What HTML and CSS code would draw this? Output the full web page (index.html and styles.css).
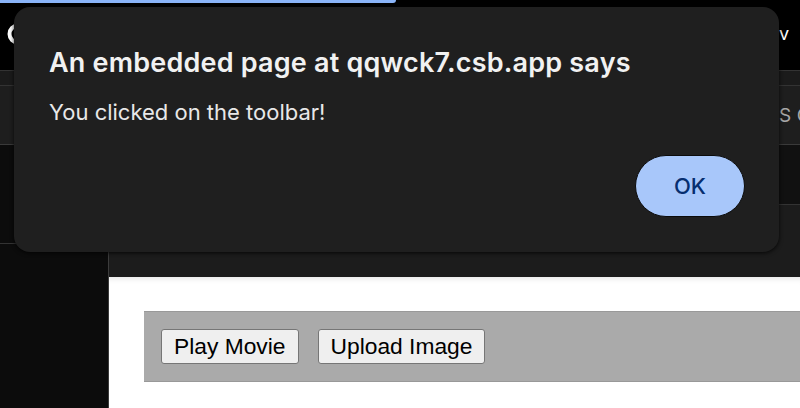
FILE: index.html
```html
<!DOCTYPE html>
<html>
<head>
<meta charset="utf-8">
<link rel="stylesheet" href="styles.css">
</head>
<body>
<div class="app">
  <header class="topbar">
    <div class="progress"></div>
    <div class="topbar-row">
      <svg class="logo" width="24" height="24" viewBox="0 0 24 24"><circle cx="12" cy="12" r="8.5" fill="none" stroke="#fff" stroke-width="4"/></svg>
      <span class="env">Dev</span>
    </div>
  </header>
  <div class="tabs"></div>
  <div class="addr"><span class="open">VS Code</span></div>
  <div class="workspace">
    <aside class="sidebar"><div class="side-top"></div></aside>
    <main class="main">
      <div class="preview-head"></div>
      <div class="preview-bar"></div>
      <div class="frame">
        <div class="toolbar">
          <button class="btn">Play Movie</button>
          <button class="btn">Upload Image</button>
        </div>
      </div>
    </main>
  </div>
</div>
<div class="dialog">
  <h1 class="dlg-title">An embedded page at qqwck7.csb.app says</h1>
  <p class="dlg-msg">You clicked on the toolbar!</p>
  <div class="dlg-actions"><button class="ok">OK</button></div>
</div>
</body>
</html>
```
FILE: styles.css
```css
html, body { margin: 0; padding: 0; }
body {
  width: 800px;
  height: 408px;
  overflow: hidden;
  background: #0c0c0c;
  font-family: Inter, "Noto Sans", sans-serif;
  position: relative;
}
.app { display: flex; flex-direction: column; height: 408px; }
.topbar {
  height: 70px;
  background: #000;
  display: flex;
  flex-direction: column;
  border-bottom: 1px solid #333;
}
.progress {
  width: 396px;
  height: 3px;
  background: #8ab4f8;
  border-radius: 0 0 3px 0;
}
.topbar-row {
  flex: 1;
  display: flex;
  align-items: center;
  justify-content: space-between;
  padding: 0 11px 6px 6px;
}
.logo { display: block; }
.env { color: #fff; font-size: 18px; font-weight: 400; }
.tabs {
  height: 14px;
  background: #1b1b1b;
  border-bottom: 1px solid #333;
}
.addr {
  height: 58px;
  background: #1e1e1e;
  border-bottom: 1px solid #3a3a3a;
  display: flex;
  align-items: center;
  padding-left: 766px;
  white-space: nowrap;
  overflow: hidden;
}
.open { color: #a8a8a8; font-size: 19px; }
.workspace { flex: 1; display: flex; min-height: 0; }
.sidebar { width: 108px; background: #0c0c0c; }
.side-top { height: 98px; border-bottom: 1px solid #333; }
.main {
  flex: 1;
  display: flex;
  flex-direction: column;
  border-left: 1px solid #3c3c3c;
}
.preview-head {
  height: 59px;
  background: #111;
  border-bottom: 1px solid #333;
}
.preview-bar { height: 72px; background: #1c1c1c; }
.frame {
  flex: 1;
  background: #fff;
  padding: 34px 0 0 35px;
  box-shadow: inset 0 7px 6px -6px rgba(0,0,0,0.12);
}
.toolbar {
  background: #aaa;
  border-top: 1px solid #999;
  border-bottom: 1px solid #999;
  padding: 17px;
  display: flex;
  gap: 19px;
}
.btn {
  height: 35px;
  padding: 0 12px;
  font-family: "Liberation Sans", Arial, sans-serif;
  font-size: 22.8px;
  color: #000;
  background: #efefef;
  border: 1px solid #767676;
  border-radius: 3px;
}
.dialog {
  position: absolute;
  left: 14px;
  top: 7px;
  width: 765px;
  height: 245px;
  box-sizing: border-box;
  background: #1f1f1f;
  border-radius: 16px;
  box-shadow: 0 1px 4px rgba(0,0,0,0.8);
  padding: 39px 34px 0 35px;
  display: flex;
  flex-direction: column;
}
.dlg-title {
  margin: 0;
  color: #f1f1f1;
  font-size: 27px;
  font-weight: 600;
  line-height: 34px;
  letter-spacing: 0.2px;
}
.dlg-msg {
  margin: 18px 0 0;
  color: #e8e8e8;
  font-size: 22px;
  line-height: 28px;
}
.dlg-actions {
  display: flex;
  justify-content: flex-end;
  margin-top: 29px;
}
.ok {
  width: 110px;
  height: 62px;
  border-radius: 31px;
  background: #a8c7fa;
  color: #062e6f;
  border: 1px solid #0b0b0b;
  font-family: Inter, "Noto Sans", sans-serif;
  font-size: 22px;
  font-weight: 500;
}
```
